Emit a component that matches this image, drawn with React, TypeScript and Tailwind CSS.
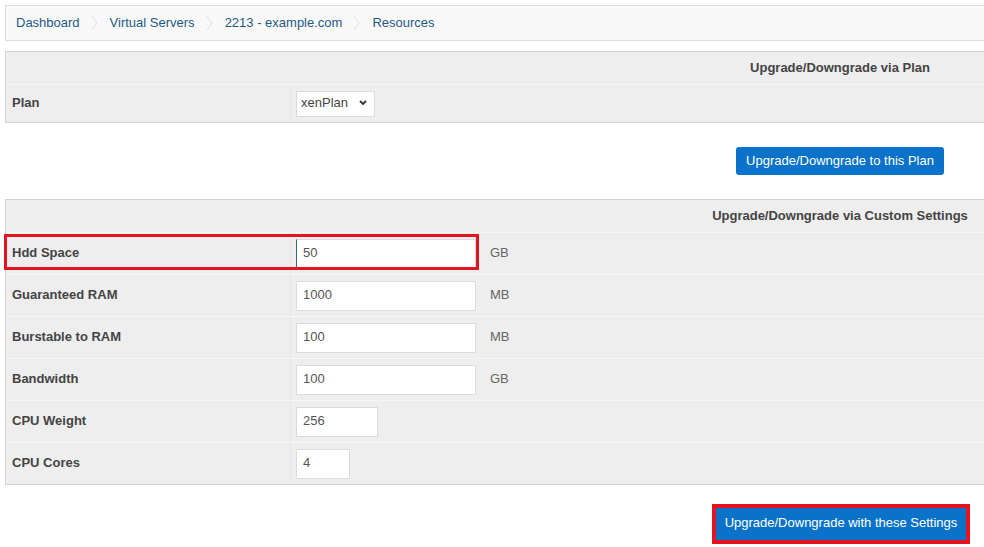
import React from "react";

const crumbs = ["Dashboard", "Virtual Servers", "2213 - example.com", "Resources"];

const rows = [
  { label: "Hdd Space", value: "50", unit: "GB", w: "w-[180px]", mark: true },
  { label: "Guaranteed RAM", value: "1000", unit: "MB", w: "w-[180px]" },
  { label: "Burstable to RAM", value: "100", unit: "MB", w: "w-[180px]" },
  { label: "Bandwidth", value: "100", unit: "GB", w: "w-[180px]" },
  { label: "CPU Weight", value: "256", unit: "", w: "w-[82px]" },
  { label: "CPU Cores", value: "4", unit: "", w: "w-[54px]" },
];

function Sep() {
  return (
    <svg width="7" height="16" viewBox="0 0 7 16" className="ml-[11px] mr-[12px]">
      <path d="M1 1 L6 8 L1 15" fill="none" stroke="#e2e2e2" strokeWidth="1" />
    </svg>
  );
}

export default function App() {
  return (
    <div className="w-[984px] h-[547px] overflow-hidden bg-white text-[13px] font-['Liberation_Sans',Arial,sans-serif]">
      <div className="w-[1670px] ml-[5px] pt-[5px]">
        {/* breadcrumb */}
        <div className="h-[36px] flex items-center pl-[10px] pb-px bg-[#f9f9f9] border border-[#dedede] text-[#1d5a85]">
          {crumbs.map((c, i) => (
            <React.Fragment key={c}>
              {i > 0 && <Sep />}
              <span>{c}</span>
            </React.Fragment>
          ))}
        </div>

        {/* plan table */}
        <div className="mt-[10px] bg-[#eeeeee] border border-[#d2d2d2]">
          <div className="h-[32px] flex items-center justify-center pb-px font-bold text-[#444]">
            Upgrade/Downgrade via Plan
          </div>
          <div className="h-[38px] flex items-center border-t border-[#f6f6f6]">
            <div className="w-[285px] h-full flex items-center pl-[6px] pb-[2px] font-bold text-[#444] border-r border-[#e6e6e6]">
              Plan
            </div>
            <div className="pl-[5px]">
              <div className="w-[79px] h-[26px] bg-white border border-[#dcdcdc] flex items-center justify-between px-[4px] pb-px text-[#444]">
                <span>xenPlan</span>
                <svg width="10" height="8" viewBox="0 0 10 8" className="mr-[2px]">
                  <path d="M2 2 L5 5 L8 2" fill="none" stroke="#333" strokeWidth="1.8" />
                </svg>
              </div>
            </div>
          </div>
        </div>

        <div className="flex justify-center mt-[24px]">
          <button className="h-[28px] w-[208px] rounded-[3px] bg-[#0a72c8] text-white text-[13px]">
            Upgrade/Downgrade to this Plan
          </button>
        </div>

        {/* custom settings table */}
        <div className="mt-[24px] bg-[#eeeeee] border border-[#d2d2d2]">
          <div className="h-[32px] flex items-center justify-center pb-px font-bold text-[#444]">
            Upgrade/Downgrade via Custom Settings
          </div>
          {rows.map((r) => (
            <div key={r.label} className="relative h-[42px] flex items-center border-t border-[#f6f6f6]">
              <div className="w-[285px] h-full flex items-center pl-[6px] pb-[2px] font-bold text-[#444] border-r border-[#e6e6e6]">
                {r.label}
              </div>
              <div className="pl-[5px] flex items-center">
                <div
                  className={`${r.w} h-[30px] bg-white border ${
                    r.mark ? "border-[#dcdcdc] border-l-[#2d6a86]" : "border-[#dcdcdc]"
                  } flex items-center pl-[6px] pb-[2px] text-[#555]`}
                >
                  {r.value}
                </div>
                {r.unit && <span className="ml-[14px] pb-[2px] text-[#666]">{r.unit}</span>}
              </div>
              {r.mark && (
                <div className="absolute left-[-2px] top-[1px] w-[475px] h-[36px] border-[3px] border-[#e3141f]" />
              )}
            </div>
          ))}
        </div>

        <div className="flex justify-center mt-[19px] pl-[2px]">
          <div className="border-4 border-[#e3141f]">
            <button className="h-[32px] w-[250px] pb-[2px] bg-[#0a72c8] text-white text-[13px]">
              Upgrade/Downgrade with these Settings
            </button>
          </div>
        </div>
      </div>
    </div>
  );
}
